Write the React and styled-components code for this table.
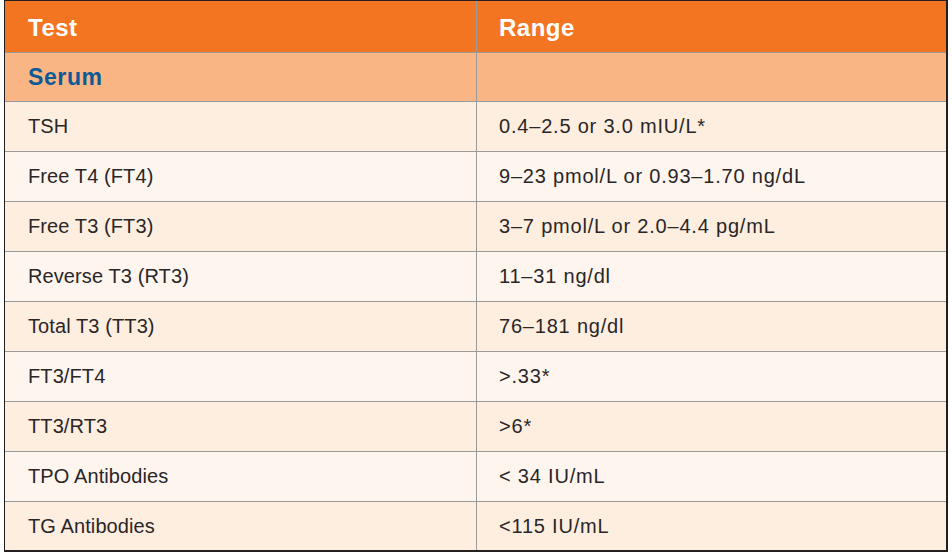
import React from 'react';
import styled, { createGlobalStyle } from 'styled-components';

const GlobalStyle = createGlobalStyle`
  html, body {
    margin: 0;
    padding: 0;
    background: #ffffff;
  }
  body {
    font-family: 'Liberation Sans', Arial, sans-serif;
  }
`;

const Page = styled.div`
  padding-left: 4px;
`;

const Table = styled.div`
  width: 944px;
  box-sizing: border-box;
  border: 1px solid #231f20;
  border-right-width: 2px;
  border-bottom-width: 2px;
`;

const Row = styled.div`
  display: grid;
  grid-template-columns: 471px 1fr;
  height: ${p => p.$height || 50}px;
  box-sizing: border-box;
  border-bottom: ${p => (p.$last ? 'none' : '1px solid #9a9a9a')};
  background: ${p => p.$bg};
`;

const Cell = styled.div`
  display: flex;
  align-items: center;
  padding-left: ${p => (p.$second ? 22 : 23)}px;
  border-left: ${p => (p.$second ? '1px solid #9a9a9a' : 'none')};
  font-size: 20px;
  letter-spacing: ${p => (p.$second ? 0.8 : 0.1)}px;
  color: #2a2627;
  white-space: nowrap;
`;

const HeadCell = styled(Cell)`
  font-size: 24px;
  font-weight: 700;
  letter-spacing: 0.5px;
  color: #ffffff;
  padding-top: 2px;
`;

const SectionCell = styled(Cell)`
  font-size: 23px;
  font-weight: 700;
  letter-spacing: 0.6px;
  color: #0c5a96;
`;

const rows = [
  ['TSH', '0.4–2.5 or 3.0 mIU/L*'],
  ['Free T4 (FT4)', '9–23 pmol/L or 0.93–1.70 ng/dL'],
  ['Free T3 (FT3)', '3–7 pmol/L or 2.0–4.4 pg/mL'],
  ['Reverse T3 (RT3)', '11–31 ng/dl'],
  ['Total T3 (TT3)', '76–181 ng/dl'],
  ['FT3/FT4', '>.33*'],
  ['TT3/RT3', '>6*'],
  ['TPO Antibodies', '< 34 IU/mL'],
  ['TG Antibodies', '<115 IU/mL'],
];

export default function App() {
  return (
    <Page>
      <GlobalStyle />
      <Table>
        <Row $height={52} $bg="#f47521">
          <HeadCell>Test</HeadCell>
          <HeadCell $second>Range</HeadCell>
        </Row>
        <Row $height={49} $bg="#f9b584">
          <SectionCell>Serum</SectionCell>
          <SectionCell $second />
        </Row>
        {rows.map(([test, range], i) => (
          <Row
            key={test}
            $last={i === rows.length - 1}
            $height={i === rows.length - 1 ? 48 : 50}
            $bg={i % 2 === 0 ? '#fdeee0' : '#fef5ef'}
          >
            <Cell>{test}</Cell>
            <Cell $second>{range}</Cell>
          </Row>
        ))}
      </Table>
    </Page>
  );
}
